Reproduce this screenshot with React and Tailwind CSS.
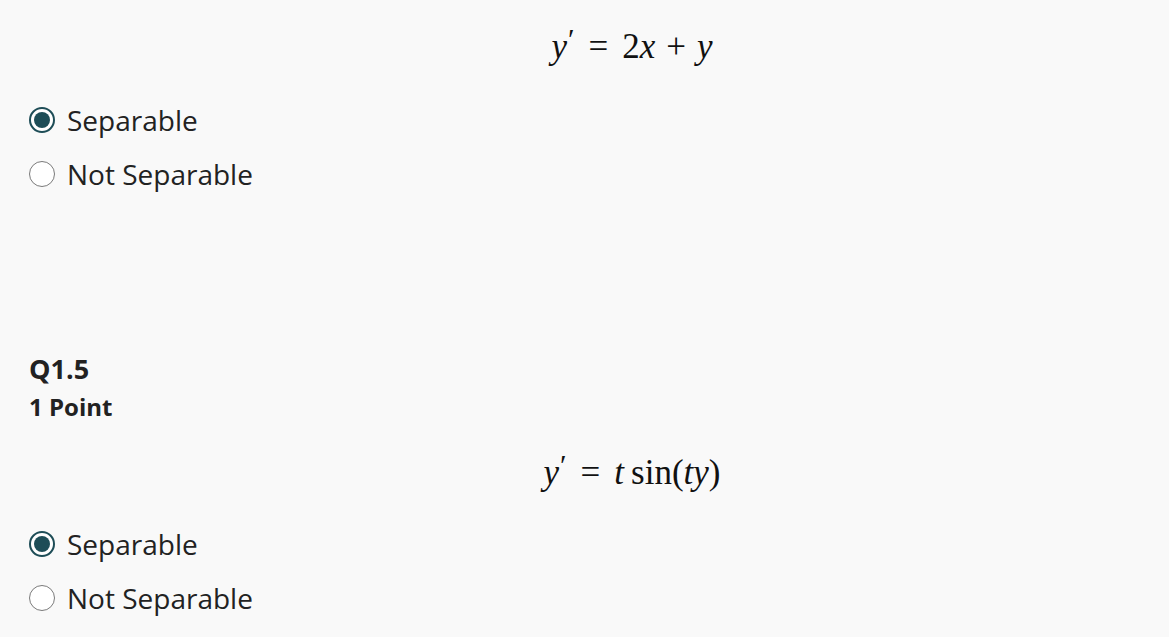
import React from 'react';

function Radio({ checked }) {
    return checked ? (
        <span className="w-[26px] h-[26px] shrink-0 rounded-full border-2 border-[#1e4d57] bg-white flex items-center justify-center">
            <span className="w-[16px] h-[16px] rounded-full bg-[#1e4d57]" />
        </span>
    ) : (
        <span className="w-[26px] h-[26px] shrink-0 rounded-full border-[1.5px] border-[#7a7a7a] bg-white" />
    );
}

function Option({ label, checked }) {
    return (
        <label className="flex items-center gap-[12px] h-[54px]">
            <Radio checked={checked} />
            <span className="text-[28px] text-[#222]">{label}</span>
        </label>
    );
}

function Equation({ children }) {
    return (
        <div className="flex justify-center pl-[95px] h-[54px] items-center text-[35px] text-[#111] font-['Liberation_Serif',serif]">
            {children}
        </div>
    );
}

function Prime() {
    return <span className="relative -top-[9px] text-[30px] ml-[1px]">′</span>;
}

export default function App() {
    return (
        <div className="min-h-[637px] w-full bg-[#f9f9f9] font-['Open_Sans',sans-serif] px-[29px] pt-[20px] overflow-hidden">
            <Equation>
                <i>y</i><Prime />
                <span className="mx-[14px]">=</span>
                <span>2</span><i>x</i>
                <span className="mx-[11px]">+</span>
                <i>y</i>
            </Equation>
            <div className="mt-[19px]">
                <Option label="Separable" checked />
                <Option label="Not Separable" />
            </div>

            <div className="mt-[151px]">
                <h3 className="text-[27px] font-bold text-[#222] leading-[34px]">Q1.5</h3>
                <p className="text-[24px] font-bold text-[#222] leading-[30px] mt-[6px]">1 Point</p>
            </div>
            <div className="mt-[24px]">
                <Equation>
                    <i>y</i><Prime />
                    <span className="mx-[14px]">=</span>
                    <i className="mr-[7px]">t</i>
                    <span>sin(</span><i>ty</i><span>)</span>
                </Equation>
            </div>
            <div className="mt-[17px]">
                <Option label="Separable" checked />
                <Option label="Not Separable" />
            </div>
        </div>
    );
}
